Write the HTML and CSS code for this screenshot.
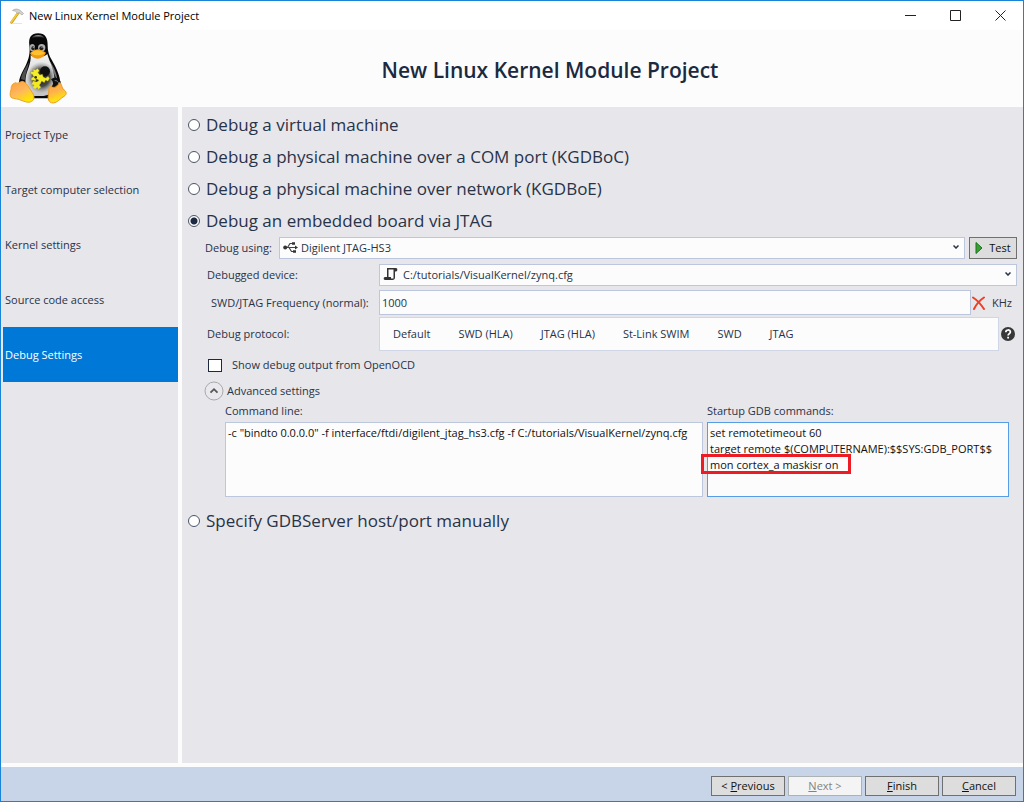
FILE: index.html
```html
<!DOCTYPE html>
<html lang="en">
<head>
<meta charset="utf-8">
<title>New Linux Kernel Module Project</title>
<link rel="stylesheet" href="styles.css">
</head>
<body>
<div class="window">
  <div class="titlebar">
    <svg class="app-icon" viewBox="0 0 16 16" aria-hidden="true">
      <path d="M4 15.500H13" stroke="#e4e4e4" stroke-width="1"/>
      <path d="M9.500 4.500 2.500 14.500" stroke="#c99a1c" stroke-width="2.600" stroke-linecap="round"/>
      <path d="M9.200 4.500 2.400 14" stroke="#f5c93a" stroke-width="1.700" stroke-linecap="round"/>
      <path d="M3.500 2.500C6 .5 9 .8 11 2.300L14.500 5.500 13 7 10 4.500 8.500 5.500C7.500 3.500 6 2.800 3.500 2.500Z" fill="#d4d4d4" stroke="#9b9b9b" stroke-width=".6"/>
    </svg>
    <span class="caption">New Linux Kernel Module Project</span>
    <button class="sys" aria-label="Minimize"><svg viewBox="0 0 11 11"><path d="M0 5.500H11"/></svg></button>
    <button class="sys" aria-label="Maximize"><svg viewBox="0 0 11 11"><path d="M.5 .5H10.500V10.500H.5Z"/></svg></button>
    <button class="sys" aria-label="Close"><svg viewBox="0 0 11 11"><path d="M.5 .5 10.500 10.500M10.500 .5 .5 10.500"/></svg></button>
  </div>

  <header class="banner">
    <svg class="tux" viewBox="15 15 180 216" aria-hidden="true">
      <defs>
        <linearGradient id="orange" x1="0" y1="0" x2=".6" y2="1"><stop offset="0" stop-color="#ff9d3c"/><stop offset=".55" stop-color="#ffb85c"/><stop offset="1" stop-color="#ffe600"/></linearGradient>
        <linearGradient id="orange2" x1="0" y1="0" x2=".3" y2="1"><stop offset="0" stop-color="#ffa337"/><stop offset=".5" stop-color="#ffb24e"/><stop offset="1" stop-color="#ffec00"/></linearGradient>
        <linearGradient id="belly" x1="0" y1="0" x2="0" y2="1"><stop offset="0" stop-color="#f2f2f2"/><stop offset="1" stop-color="#c4c4c4"/></linearGradient>
        <radialGradient id="core"><stop offset="0" stop-color="#111"/><stop offset=".55" stop-color="#3a3a3a" stop-opacity=".9"/><stop offset="1" stop-color="#999" stop-opacity="0"/></radialGradient>
        <linearGradient id="shine" x1="0" y1="0" x2="0" y2="1"><stop offset="0" stop-color="#aaa"/><stop offset="1" stop-color="#222" stop-opacity="0"/></linearGradient>
      </defs>
      <path d="M79 52C76 28 85 16 105 16C127 16 134 29 134 53C134 80 145 91 153 108C163 128 176 155 171 177C168 191 153 193 148 211H72C58 192 46 187 48 164C49 143 64 123 70 108C77 93 82 77 79 52Z" fill="#080808"/>
      <path d="M86 32C90 18 121 17 126 33C119 27 95 26 86 32Z" fill="url(#shine)"/>
      <path d="M54 153C57 132 71 115 78 101C75 119 67 137 65 157Z" fill="#777" opacity=".65"/>
      <path d="M140 99C154 118 163 140 163 158C155 140 146 122 140 99Z" fill="#999" opacity=".75"/>
      <path d="M83 81C93 91 124 89 133 78C139 101 158 131 154 166C152 190 139 203 122 204H91C76 194 64 174 68 149C71 127 85 108 83 81Z" fill="url(#belly)"/>
      <ellipse cx="115" cy="149" rx="45" ry="48" fill="url(#core)"/>
      <circle cx="126" cy="130" r="15" fill="#111"/>
      <path d="M90 122 97 126 104 121 109 128 105 134 111 141 118 138 121 147 128 150 135 145 140 151 135 160 128 157 124 164 116 160 112 167 105 162 107 156 99 153 98 160 91 157 84 157 85 149 92 146 88 139 82 137 84 130 91 131Z" fill="#f5ed27" stroke="#777000" stroke-width="1"/>
      <path d="M91 159 100 162 108 158 113 165 109 172 114 178 106 184 103 178 96 183 90 178 94 171 86 169Z" fill="#f3e91f"/>
      <circle cx="98" cy="148" r="4" fill="#302f1b"/>
      <path d="M144 154C152 146 166 148 172 160C176 169 168 177 159 180L145 177C152 170 152 162 144 154Z" fill="#111"/>
      <path d="M155 158C160 156 166 161 168 167" fill="none" stroke="#777" stroke-width="3"/>
      <ellipse cx="88" cy="59" rx="8" ry="11" fill="#a8a8a8"/><ellipse cx="116" cy="59" rx="11" ry="11" fill="#b0b0b0"/>
      <ellipse cx="90" cy="61" rx="5" ry="6" fill="#222"/><ellipse cx="115" cy="61" rx="6" ry="6" fill="#222"/>
      <circle cx="91" cy="58" r="1.500" fill="#ddd"/><circle cx="117" cy="58" r="1.500" fill="#ddd"/>
      <path d="M81 75C88 71 95 64 104 64C113 65 122 70 129 74C126 82 116 92 104 92C93 92 84 84 81 75Z" fill="#f29a0b"/>
      <path d="M84 74C92 71 97 66 104 67C112 68 119 72 126 75C113 84 94 85 84 74Z" fill="#ffc032"/>
      <path d="M38 164C46 169 51 160 58 160C70 161 78 180 88 194C99 211 91 221 77 223C64 223 52 213 32 211C18 210 21 196 24 185C25 175 24 169 38 164Z" fill="url(#orange)" stroke="#eba226" stroke-width="3"/>
      <path d="M142 174C151 181 160 180 169 164C176 164 175 175 180 183C190 190 194 198 183 205C171 212 163 224 151 225C136 225 133 211 137 198C138 189 136 178 142 174Z" fill="url(#orange2)" stroke="#e99b1c" stroke-width="3"/>
    </svg>
    <h1>New Linux Kernel Module Project</h1>
  </header>

  <div class="main">
    <nav class="steps">
      <a href="#">Project Type</a>
      <a href="#">Target computer selection</a>
      <a href="#">Kernel settings</a>
      <a href="#">Source code access</a>
      <a href="#" class="current" aria-current="step">Debug Settings</a>
    </nav>

    <main class="page">
      <label class="mode"><input type="radio" name="mode">Debug a virtual machine</label>
      <label class="mode"><input type="radio" name="mode">Debug a physical machine over a COM port (KGDBoC)</label>
      <label class="mode"><input type="radio" name="mode">Debug a physical machine over network (KGDBoE)</label>
      <label class="mode"><input type="radio" name="mode" checked>Debug an embedded board via JTAG</label>

      <div class="jtag">
        <div class="using">
          <label for="using">Debug using:</label>
          <div class="combo">
            <svg class="combo-icon" viewBox="0 0 16 16" aria-hidden="true"><g fill="none" stroke="#444" stroke-width="1.200"><path d="M2 7.500H13M4.500 7.500 7 3.500H10M6 7.500 8.500 11.500H11"/></g><circle cx="2.200" cy="7.500" r="2" fill="#333"/><path d="M9 2.200H12V4.800H9ZM10 10.200H13V12.800H10ZM12 5.500 15 7.500 12 9.500Z" fill="#333"/></svg>
            <select id="using"><option>Digilent JTAG-HS3</option></select>
            <svg class="chevron" viewBox="0 0 6 4" aria-hidden="true"><path d="M.5 .5 3 3 5.500 .5"/></svg>
          </div>
          <button class="btn test"><svg viewBox="0 0 8 12" aria-hidden="true"><path d="M1 .5 7 6 1 11.500Z" fill="#39a035" stroke="#17731b"/></svg>Test</button>
        </div>

        <div class="row">
          <label for="device">Debugged device:</label>
          <div class="combo">
            <svg class="combo-icon" viewBox="0 0 16 16" aria-hidden="true"><path d="M4 1H13C14.800 1 14.800 4.500 13 4.500H12V10.500C12 12 11 13 9.500 13H2C.3 13 .3 10 2 10H4Z" fill="#333"/><path d="M5.500 2.500H10.500V11.500H8V10H5.500Z" fill="#fcfcfc"/></svg>
            <select id="device" class="wide-icon"><option>C:/tutorials/VisualKernel/zynq.cfg</option></select>
            <svg class="chevron" viewBox="0 0 6 4" aria-hidden="true"><path d="M.5 .5 3 3 5.500 .5"/></svg>
          </div>
        </div>

        <div class="row freq">
          <label for="freq">SWD/JTAG Frequency (normal):</label>
          <input id="freq" type="text" value="1000">
          <button class="clear" aria-label="Clear frequency"><svg viewBox="0 0 14 14"><path d="M1 1.500C5 4 9 8.500 12 13M12 1.500C8 4 4 9 2 13" fill="none" stroke="#ef4023" stroke-width="2" stroke-linecap="round"/></svg></button>
          <span class="unit">KHz</span>
        </div>

        <div class="row protocol">
          <span id="protocol">Debug protocol:</span>
          <div class="options" role="group" aria-labelledby="protocol">
            <button>Default</button><button>SWD (HLA)</button><button>JTAG (HLA)</button><button>St-Link SWIM</button><button>SWD</button><button>JTAG</button>
          </div>
          <button class="help" aria-label="Help"><svg viewBox="0 0 14 14"><circle cx="7" cy="7" r="7" fill="#383838"/><path d="M4.800 5.300C4.800 2.200 9.400 2.300 9.400 5C9.400 6.600 7.100 6.600 7.100 8.500" fill="none" stroke="#fff" stroke-width="1.700"/><path d="M6.200 9.700H8V11.500H6.200Z" fill="#fff"/></svg></button>
        </div>

        <label class="check"><input type="checkbox">Show debug output from OpenOCD</label>

        <button class="expander" aria-expanded="true"><svg viewBox="0 0 20 20" aria-hidden="true"><circle cx="10" cy="10" r="9" fill="#e9e9ed" stroke="#a9a9ad"/><path d="M6.500 11.700 10 8.200 13.500 11.700" fill="none" stroke="#555" stroke-width="1.800"/></svg>Advanced settings</button>

        <div class="advanced">
          <div class="command">
            <label for="cmd">Command line:</label>
            <textarea id="cmd" wrap="off">-c "bindto 0.0.0.0" -f interface/ftdi/digilent_jtag_hs3.cfg -f C:/tutorials/VisualKernel/zynq.cfg</textarea>
          </div>
          <div class="startup">
            <label for="gdb">Startup GDB commands:</label>
            <textarea id="gdb" wrap="off">set remotetimeout 60
target remote $(COMPUTERNAME):$$SYS:GDB_PORT$$
mon cortex_a maskisr on</textarea>
            <div class="marker"></div>
          </div>
        </div>
      </div>

      <label class="mode"><input type="radio" name="mode">Specify GDBServer host/port manually</label>
    </main>
  </div>

  <footer class="actions">
    <button class="btn">&lt; <u>P</u>revious</button>
    <button class="btn" disabled><u>N</u>ext &gt;</button>
    <button class="btn"><u>F</u>inish</button>
    <button class="btn"><u>C</u>ancel</button>
  </footer>
</div>
</body>
</html>
```
FILE: styles.css
```css
* { box-sizing: border-box; }

body {
  margin: 0;
  font: 11px/16px "Open Sans", "Noto Sans", sans-serif;
  color: #273348;
}

button, input, select, textarea {
  font: inherit;
  color: inherit;
  margin: 0;
}

button {
  padding: 0;
  border: 0;
  background: none;
}

svg { display: block; flex: none; }

.window {
  display: flex;
  flex-direction: column;
  min-height: 100vh;
  border: 1px solid #1883d7;
  background: #fcfcfc;
}

.titlebar {
  display: flex;
  align-items: center;
  height: 29px;
  padding-left: 8px;
  background: #fff;
  color: #000;
}
.app-icon { width: 16px; height: 16px; }
.caption { flex: 1; padding-left: 4px; }
.sys {
  display: grid;
  place-items: center;
  width: 45px;
  height: 29px;
}
.sys svg {
  width: 11px;
  height: 11px;
  fill: none;
  stroke: #222;
}

.banner {
  display: flex;
  align-items: center;
  height: 77px;
  padding-left: 7px;
}
.tux { width: 60px; height: 72px; }
.banner h1 {
  flex: 1;
  margin: 0;
  padding: 2px 0 0 9px;
  font-size: 21px;
  font-weight: 600;
  line-height: 28px;
  text-align: center;
  color: #1b2a41;
}

.main {
  flex: 1;
  display: flex;
  gap: 4px;
}
.steps {
  width: 177px;
  padding-left: 2px;
  background: #e7e6eb;
}
.steps a {
  display: flex;
  align-items: center;
  height: 55px;
  padding-left: 2px;
  color: inherit;
  text-decoration: none;
}
.steps .current { background: #0078d7; color: #fff; }

.page {
  flex: 1;
  min-width: 0;
  padding: 2px 6px 0;
  background: #e7e6eb;
}

.mode {
  display: flex;
  align-items: center;
  gap: 6px;
  height: 32px;
  font-size: 17px;
  line-height: 24px;
}
.mode input {
  appearance: none;
  width: 12px;
  height: 12px;
  border: 1px solid #4a5568;
  border-radius: 50%;
  background: #fff;
}
.mode input:checked { background: radial-gradient(circle, #1b2a41 3px, #fff 4px); }

.jtag { padding-left: 16px; }

.using {
  display: flex;
  align-items: center;
  gap: 4px;
  padding-left: 1px;
}
.using label { width: 70px; }
.combo {
  position: relative;
  flex: 1;
  height: 22px;
}
.combo select {
  appearance: none;
  display: block;
  width: 100%;
  height: 22px;
  padding: 0 20px 0 21px;
  border: 1px solid #bcc6dc;
  border-radius: 0;
  background: #fcfcfc;
}
.combo select.wide-icon { padding-left: 23px; }
.combo-icon {
  position: absolute;
  left: 4px;
  top: 3px;
  width: 16px;
  height: 16px;
}
.chevron {
  position: absolute;
  right: 6px;
  top: 8px;
  width: 6px;
  height: 4px;
  fill: none;
  stroke: #273348;
  stroke-width: 1.5;
}

.btn {
  height: 20px;
  border: 1px solid #707070;
  background: #ddd;
  color: #111;
}
.btn:disabled {
  border-color: #adb2b5;
  background: #f4f4f4;
  color: #838383;
}
.test {
  display: flex;
  align-items: center;
  justify-content: center;
  gap: 6px;
  width: 48px;
  height: 22px;
}
.test svg { width: 8px; height: 12px; }

.row {
  display: grid;
  grid-template-columns: 172px 1fr;
  align-items: center;
  padding-left: 3px;
  margin-top: 5px;
}
.freq {
  grid-template-columns: 172px 1fr 16px 30px;
  margin-top: 4px;
}
.freq label { padding-left: 4px; white-space: nowrap; }
.freq input {
  min-width: 0;
  height: 25px;
  padding: 0 2px;
  border: 1px solid #bcc6dc;
  background: #fcfcfc;
}
.clear { justify-self: center; }
.clear svg { width: 14px; height: 14px; }
.unit { padding-left: 5px; }

.protocol {
  grid-template-columns: 172px 1fr 18px;
  margin-top: 2px;
}
.options {
  display: flex;
  align-items: center;
  gap: 28px;
  height: 34px;
  padding-left: 13px;
  border: 1px solid #d0d6e5;
  background: #fcfcfc;
}
.help { justify-self: center; }
.help svg { width: 14px; height: 14px; }

.check {
  display: flex;
  align-items: center;
  gap: 10px;
  height: 16px;
  margin-top: 6px;
  padding-left: 4px;
}
.check input {
  appearance: none;
  width: 14px;
  height: 13px;
  border: 1px solid #1b2a41;
  background: #fff;
}

.expander {
  display: flex;
  align-items: center;
  gap: 3px;
  margin-top: 8px;
}
.expander svg { width: 20px; height: 20px; }

.advanced {
  display: grid;
  grid-template-columns: 478fr 302fr;
  gap: 4px;
  padding: 2px 8px 8px 21px;
}
.advanced label { display: block; }
.advanced textarea {
  display: block;
  width: 100%;
  height: 75px;
  margin-top: 3px;
  padding: 2px;
  border: 1px solid #bcc6dc;
  background: #fcfcfc;
  color: #111;
  resize: none;
  overflow: hidden;
}
.startup { position: relative; }
.startup textarea { border-color: #569de5; }
.marker {
  position: absolute;
  left: -6px;
  top: 51px;
  width: 150px;
  height: 20px;
  border: 3px solid #ed1c24;
  pointer-events: none;
}

.actions {
  display: flex;
  justify-content: flex-end;
  gap: 3px;
  margin-top: 4px;
  padding: 9px 7px 5px;
  background: #c8d4e8;
}
.actions .btn { width: 74px; }
```
